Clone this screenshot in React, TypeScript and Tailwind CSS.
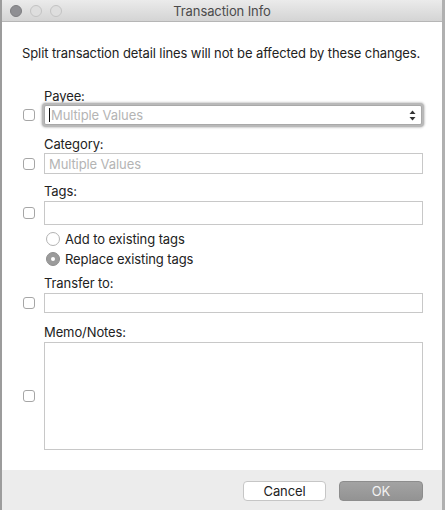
import React from "react";

const font = { fontFamily: "Inter, 'Noto Sans', 'Liberation Sans', sans-serif" };

function Check() {
  return <div className="w-[12px] h-[12px] rounded-[3px] border border-[#a6a6a6] bg-white shrink-0" />;
}

function Radio({ on }: { on?: boolean }) {
  return on ? (
    <div className="w-[14px] h-[14px] rounded-full bg-[#9b9b9b] border border-[#8e8e8e] flex items-center justify-center shrink-0">
      <div className="w-[4px] h-[4px] rounded-full bg-white" />
    </div>
  ) : (
    <div className="w-[14px] h-[14px] rounded-full bg-white border border-[#b3b3b3] shrink-0" />
  );
}

export default function App() {
  return (
    <div
      className="w-[445px] h-[510px] flex flex-col bg-[#ececec] border-l-2 border-r-[3px] border-l-[#9c9c9c] border-r-[#b0b0b0] overflow-hidden text-[13px] text-[#222] tracking-[-0.1px]"
      style={font}
    >
      {/* title bar */}
      <div className="h-[22px] shrink-0 bg-gradient-to-b from-[#ebebeb] to-[#d4d4d4] border-b border-[#b6b6b6] flex items-center relative">
        <div className="absolute left-[8px] top-[5px] flex gap-[8px]">
          <div className="w-[12px] h-[12px] rounded-full bg-[#8f8f93] border border-[#7d7d80]" />
          <div className="w-[12px] h-[12px] rounded-full bg-[#dedede] border border-[#c3c3c3]" />
          <div className="w-[12px] h-[12px] rounded-full bg-[#dedede] border border-[#c3c3c3]" />
        </div>
        <div className="flex-1 text-center text-[13px] text-[#4b4b4b] leading-[16px]">Transaction Info</div>
      </div>

      {/* content */}
      <div className="bg-white h-[448px] shrink-0 pl-[20px] pr-[19px]">
        <div className="mt-[23px] leading-[16px] whitespace-nowrap">
          Split transaction detail lines will not be affected by these changes.
        </div>

        {/* Payee */}
        <div className="mt-[27px] pl-[22px] leading-[16px]">Payee:</div>
        <div className="flex items-center mt-[1px]">
          <div className="w-[22px] pl-[1px]"><Check /></div>
          <div className="relative h-[20px] w-[378px] border border-[#a9a9a9] bg-white shadow-[0_0_0_2px_#b9b9b9,0_0_2px_3px_#d0d0d0] rounded-[2px] flex items-center pl-[4px]">
            <div className="w-[1px] h-[14px] bg-[#111]" />
            <span className="text-[#b4b4b4] leading-[16px] ml-[1px]">Multiple Values</span>
            <svg className="absolute right-[5px] top-[4px]" width="7" height="11" viewBox="0 0 7 11">
              <path d="M3.5 0.5 L6.5 4 L0.5 4 Z" fill="#333" />
              <path d="M3.5 10.5 L6.5 7 L0.5 7 Z" fill="#333" />
            </svg>
          </div>
        </div>

        {/* Category */}
        <div className="mt-[11px] pl-[22px] leading-[16px]">Category:</div>
        <div className="flex items-center mt-[1px]">
          <div className="w-[22px] pl-[1px]"><Check /></div>
          <div className="h-[21px] w-[379px] border border-[#c8c8c8] bg-white flex items-center pl-[4px]">
            <span className="text-[#b4b4b4] leading-[16px]">Multiple Values</span>
          </div>
        </div>

        {/* Tags */}
        <div className="mt-[9px] pl-[22px] leading-[16px]">Tags:</div>
        <div className="flex items-center mt-[2px]">
          <div className="w-[22px] pl-[1px]"><Check /></div>
          <div className="h-[24px] w-[379px] border border-[#c8c8c8] bg-white" />
        </div>
        <div className="pl-[24px] mt-[6px] flex flex-col gap-[4px]">
          <div className="flex items-center gap-[5px] h-[16px]">
            <Radio />
            <span className="leading-[16px]">Add to existing tags</span>
          </div>
          <div className="flex items-center gap-[5px] h-[16px]">
            <Radio on />
            <span className="leading-[16px]">Replace existing tags</span>
          </div>
        </div>

        {/* Transfer */}
        <div className="mt-[8px] pl-[22px] leading-[16px]">Transfer to:</div>
        <div className="flex items-center mt-[2px]">
          <div className="w-[22px] pl-[1px]"><Check /></div>
          <div className="h-[20px] w-[379px] border border-[#c8c8c8] bg-white" />
        </div>

        {/* Memo */}
        <div className="mt-[11px] pl-[22px] leading-[16px]">Memo/Notes:</div>
        <div className="flex items-center mt-[2px]">
          <div className="w-[22px] pl-[1px]"><Check /></div>
          <div className="h-[108px] w-[379px] border border-[#c8c8c8] bg-white" />
        </div>
      </div>

      {/* footer */}
      <div className="flex-1 flex justify-end items-start pt-[11px] pr-[19px] gap-[13px]">
        <div className="w-[83px] h-[20px] bg-white border border-[#c6c6c6] rounded-[4px] flex items-center justify-center leading-[16px] text-[#222]">
          Cancel
        </div>
        <div className="w-[84px] h-[20px] bg-gradient-to-b from-[#a3a3a3] to-[#939393] border border-[#8d8d8d] rounded-[4px] flex items-center justify-center leading-[16px] text-[#f2f2f2]">
          OK
        </div>
      </div>
    </div>
  );
}
